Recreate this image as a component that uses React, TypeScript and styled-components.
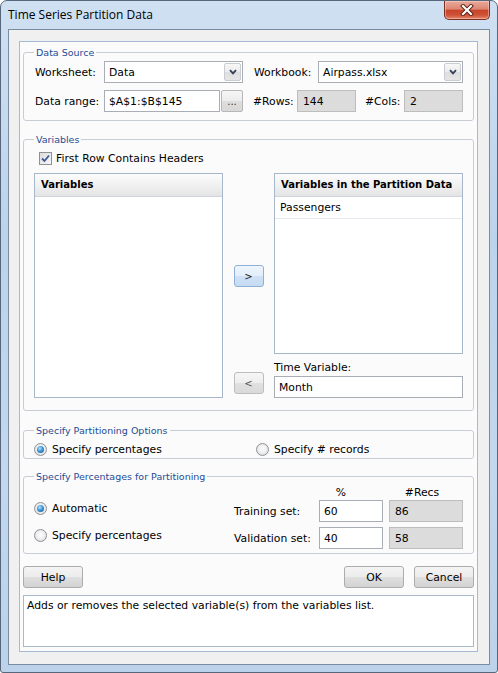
import React from 'react';
import styled, { createGlobalStyle } from 'styled-components';

const GlobalStyle = createGlobalStyle`
  html, body {
    margin: 0;
    padding: 0;
    background: #ffffff;
  }
  body {
    font-family: "DejaVu Sans", sans-serif;
    font-size: 10.8px;
    color: #000;
  }
  * {
    box-sizing: border-box;
  }
`;

const Window = styled.div`
  width: 498px;
  height: 673px;
  display: flex;
  flex-direction: column;
  border: 1px solid #56677b;
  border-radius: 7px 7px 3px 3px;
  background: linear-gradient(180deg, #cfe0f2 0%, #bcd3ec 35%, #c3d8ee 70%, #bcd2ea 100%);
  overflow: hidden;
`;

const TitleBar = styled.div`
  height: 28px;
  display: flex;
  align-items: flex-start;
  justify-content: space-between;
  padding-left: 7px;
`;

const Title = styled.span`
  font-family: "Open Sans", "Noto Sans", sans-serif;
  font-size: 12px;
  line-height: 28px;
  color: #000;
`;

const CloseButton = styled.div`
  width: 46px;
  height: 19px;
  margin-right: 7px;
  display: flex;
  align-items: center;
  justify-content: center;
  border: 1px solid #7b3024;
  border-top: none;
  border-radius: 0 0 5px 5px;
  background: linear-gradient(180deg, #e9aa9c 0%, #dc8672 45%, #c7442b 52%, #cf5236 78%, #e2876b 100%);
  box-shadow: inset 0 0 0 1px rgba(255, 220, 210, 0.45);
`;

const Client = styled.div`
  flex: 1;
  display: flex;
  margin: 0 7px 7px 7px;
  padding: 11px 11px 12px 10px;
  border: 1px solid #7b8ca1;
  background: #f0f0f0;
`;

const Panel = styled.div`
  flex: 1;
  display: flex;
  flex-direction: column;
  padding: 4px 3px 4px 3px;
  border: 1px solid #a6bad3;
  background: #fbfbfb;
`;

const Group = styled.fieldset<{ $pad: string; $mt?: number }>`
  margin: ${({ $mt }) => $mt ?? 0}px 0 0;
  padding: ${({ $pad }) => $pad};
  border: 1px solid #c6cdd7;
  border-radius: 3px;
  min-width: 0;
`;

const Legend = styled.legend`
  padding: 0 2px;
  font-size: 9.5px;
  line-height: 13px;
  color: #1f4b94;
`;

const FieldRow = styled.div<{ $mt?: number }>`
  display: flex;
  align-items: center;
  height: 22px;
  margin-top: ${({ $mt }) => $mt ?? 0}px;
`;

const FieldLabel = styled.span<{ $w: number; $ml?: number }>`
  flex: none;
  width: ${({ $w }) => $w}px;
  margin-left: ${({ $ml }) => $ml ?? 0}px;
  padding-left: 1px;
  white-space: nowrap;
`;

const TextBox = styled.div<{ $w?: number; $ro?: boolean }>`
  flex: none;
  width: ${({ $w }) => ($w ? `${$w}px` : '100%')};
  height: 22px;
  display: flex;
  align-items: center;
  padding-left: ${({ $ro }) => ($ro ? 5 : 4)}px;
  border: 1px solid ${({ $ro }) => ($ro ? '#bdbdbd' : '#a9aeb6')};
  background: ${({ $ro }) => ($ro ? '#dcdcdc' : '#ffffff')};
  white-space: nowrap;
`;

const SelectBox = styled.div<{ $w: number }>`
  flex: none;
  width: ${({ $w }) => $w}px;
  height: 22px;
  display: flex;
  align-items: stretch;
  border: 1px solid #a9aeb6;
  background: #ffffff;
`;

const SelectValue = styled.span`
  flex: 1;
  display: flex;
  align-items: center;
  padding-left: 4px;
`;

const ArrowBox = styled.span`
  width: 17px;
  margin: 1px;
  display: flex;
  align-items: center;
  justify-content: center;
  border: 1px solid #c9cdd2;
  border-radius: 2px;
  background: linear-gradient(180deg, #f7f7f7 0%, #ececec 50%, #dedede 51%, #e6e6e6 100%);
`;

const EllipsisButton = styled.div`
  flex: none;
  width: 22px;
  height: 22px;
  margin-left: 1px;
  display: flex;
  align-items: flex-end;
  justify-content: center;
  padding-bottom: 4px;
  border: 1px solid #b7b7b7;
  border-radius: 2px;
  background: linear-gradient(180deg, #f6f6f6 0%, #ececec 50%, #dedede 51%, #d8d8d8 100%);
  color: #333;
  font-size: 10px;
  line-height: 10px;
`;

const CheckRow = styled.label`
  display: flex;
  align-items: center;
  gap: 4px;
  height: 15px;
  padding-left: 5px;
`;

const CheckBox = styled.span`
  flex: none;
  width: 13px;
  height: 13px;
  display: flex;
  align-items: center;
  justify-content: center;
  border: 1px solid #8e9297;
  background: linear-gradient(135deg, #dcdcdc 0%, #f7f7f7 100%);
`;

const ListsGrid = styled.div`
  display: grid;
  grid-template-columns: 189px 51px 189px;
  height: 225px;
  margin-top: 7px;
`;

const ListBox = styled.div<{ $h?: number }>`
  display: flex;
  flex-direction: column;
  height: ${({ $h }) => ($h ? `${$h}px` : '100%')};
  border: 1px solid #a7b6c8;
  background: #ffffff;
`;

const ListHeader = styled.div`
  height: 23px;
  flex: none;
  padding-left: 6px;
  line-height: 22px;
  font-size: 10px;
  font-weight: 700;
  border-bottom: 1px solid #cfd4da;
  background: linear-gradient(180deg, #fcfcfc 0%, #f1f1f1 50%, #e4e4e4 100%);
  white-space: nowrap;
`;

const ListItem = styled.div`
  height: 22px;
  padding-left: 5px;
  line-height: 21px;
  border-bottom: 1px solid #e6eaef;
`;

const MoveColumn = styled.div`
  display: flex;
  flex-direction: column;
  align-items: center;
`;

const MoveButton = styled.div<{ $hot?: boolean; $top?: number }>`
  width: 30px;
  height: 22px;
  margin-top: ${({ $top }) => ($top !== undefined ? `${$top}px` : 'auto')};
  margin-bottom: ${({ $top }) => ($top !== undefined ? 0 : 4)}px;
  display: flex;
  align-items: center;
  justify-content: center;
  border: 1px solid ${({ $hot }) => ($hot ? '#8fb1d8' : '#bdbdbd')};
  border-radius: 3px;
  background: ${({ $hot }) =>
    $hot
      ? 'linear-gradient(180deg, #eef5fc 0%, #e2eefa 50%, #cfe1f5 51%, #c6dbf2 100%)'
      : 'linear-gradient(180deg, #f6f6f6 0%, #eeeeee 50%, #e0e0e0 51%, #dadada 100%)'};
  color: ${({ $hot }) => ($hot ? '#222' : '#555')};
  font-size: 10px;
`;

const RightColumn = styled.div`
  display: flex;
  flex-direction: column;
`;

const SmallCaption = styled.div`
  margin-top: 6px;
  height: 16px;
  line-height: 16px;
`;

const RadioRow = styled.div`
  display: flex;
  align-items: center;
  height: 16px;
`;

const RadioOption = styled.label<{ $w?: number }>`
  display: flex;
  align-items: center;
  gap: 5px;
  height: 16px;
  width: ${({ $w }) => ($w ? `${$w}px` : 'auto')};
  white-space: nowrap;
`;

const RadioDot = styled.span<{ $on?: boolean }>`
  flex: none;
  width: 13px;
  height: 13px;
  display: flex;
  align-items: center;
  justify-content: center;
  border-radius: 50%;
  border: 1px solid #8d9196;
  background: radial-gradient(circle at 50% 45%, #fdfdfd 0%, #eeeeee 50%, #d4d4d4 100%);

  &::after {
    content: '';
    display: ${({ $on }) => ($on ? 'block' : 'none')};
    width: 7px;
    height: 7px;
    border-radius: 50%;
    background: radial-gradient(circle at 40% 35%, #b6e6ff 0%, #3d95d8 45%, #17508c 100%);
  }
`;

const SplitRow = styled.div`
  display: flex;
`;

const RadioColumn = styled.div`
  width: 200px;
  flex: none;
  display: flex;
  flex-direction: column;
  gap: 11px;
  padding-top: 14px;
`;

const TableColumn = styled.div`
  display: flex;
  flex-direction: column;
`;

const HeadRow = styled.div`
  display: grid;
  grid-template-columns: 85px 70px 74px;
  height: 14px;
  line-height: 14px;
`;

const HeadCell = styled.span<{ $shift: number }>`
  text-align: center;
  padding-right: ${({ $shift }) => $shift}px;
`;

const TableRow = styled.div<{ $mt?: number }>`
  display: grid;
  grid-template-columns: 85px 70px 74px;
  align-items: center;
  height: 22px;
  margin-top: ${({ $mt }) => $mt ?? 0}px;
  white-space: nowrap;
`;

const ButtonBar = styled.div`
  display: flex;
  gap: 10px;
  margin-top: 12px;
`;

const PushButton = styled.div<{ $push?: boolean }>`
  width: 60px;
  height: 22px;
  margin-left: ${({ $push }) => ($push ? 'auto' : 0)};
  display: flex;
  align-items: center;
  justify-content: center;
  border: 1px solid #acacac;
  border-radius: 3px;
  background: linear-gradient(180deg, #f4f4f4 0%, #ececec 50%, #dfdfdf 51%, #d3d3d3 100%);
`;

const Description = styled.div`
  flex: 1;
  margin-top: 7px;
  padding: 3px 3px;
  border: 1px solid #a9b8ca;
  background: #ffffff;
  line-height: 13px;
`;

const Chevron = () => (
  <svg width="8" height="6" viewBox="0 0 8 6">
    <path d="M1 1.2 L4 4.3 L7 1.2" fill="none" stroke="#34415a" strokeWidth="1.9" />
  </svg>
);

const CloseGlyph = () => (
  <svg width="14" height="12" viewBox="0 0 14 12">
    <path d="M3 2 L11 10 M11 2 L3 10" stroke="#5a1d12" strokeWidth="4" strokeLinecap="square" />
    <path d="M3 2 L11 10 M11 2 L3 10" stroke="#ffffff" strokeWidth="2.2" strokeLinecap="square" />
  </svg>
);

const CheckMark = () => (
  <svg width="9" height="9" viewBox="0 0 9 9">
    <path d="M1 4.5 L3.5 7 L8 1.5" fill="none" stroke="#3f5796" strokeWidth="1.8" />
  </svg>
);

const App: React.FC = () => {
  return (
    <>
      <GlobalStyle />
      <Window>
        <TitleBar>
          <Title>Time Series Partition Data</Title>
          <CloseButton>
            <CloseGlyph />
          </CloseButton>
        </TitleBar>
        <Client>
          <Panel>
            <Group $pad="2px 10px 8px 10px">
              <Legend>Data Source</Legend>
              <FieldRow>
                <FieldLabel $w={70}>Worksheet:</FieldLabel>
                <SelectBox $w={139}>
                  <SelectValue>Data</SelectValue>
                  <ArrowBox>
                    <Chevron />
                  </ArrowBox>
                </SelectBox>
                <FieldLabel $w={65} $ml={10}>Workbook:</FieldLabel>
                <SelectBox $w={145}>
                  <SelectValue>Airpass.xlsx</SelectValue>
                  <ArrowBox>
                    <Chevron />
                  </ArrowBox>
                </SelectBox>
              </FieldRow>
              <FieldRow $mt={7}>
                <FieldLabel $w={70}>Data range:</FieldLabel>
                <TextBox $w={116}>$A$1:$B$145</TextBox>
                <EllipsisButton>...</EllipsisButton>
                <FieldLabel $w={45} $ml={9}>#Rows:</FieldLabel>
                <TextBox $w={59} $ro>144</TextBox>
                <FieldLabel $w={40} $ml={8}>#Cols:</FieldLabel>
                <TextBox $w={59} $ro>2</TextBox>
              </FieldRow>
            </Group>

            <Group $pad="5px 10px 12px 10px" $mt={12}>
              <Legend>Variables</Legend>
              <CheckRow>
                <CheckBox>
                  <CheckMark />
                </CheckBox>
                First Row Contains Headers
              </CheckRow>
              <ListsGrid>
                <ListBox>
                  <ListHeader>Variables</ListHeader>
                </ListBox>
                <MoveColumn>
                  <MoveButton $hot $top={92}>&gt;</MoveButton>
                  <MoveButton>&lt;</MoveButton>
                </MoveColumn>
                <RightColumn>
                  <ListBox $h={181}>
                    <ListHeader>Variables in the Partition Data</ListHeader>
                    <ListItem>Passengers</ListItem>
                  </ListBox>
                  <SmallCaption>Time Variable:</SmallCaption>
                  <TextBox>Month</TextBox>
                </RightColumn>
              </ListsGrid>
            </Group>

            <Group $pad="4px 10px 1px 10px" $mt={13}>
              <Legend>Specify Partitioning Options</Legend>
              <RadioRow>
                <RadioOption $w={222}>
                  <RadioDot $on />
                  Specify percentages
                </RadioOption>
                <RadioOption>
                  <RadioDot />
                  Specify # records
                </RadioOption>
              </RadioRow>
            </Group>

            <Group $pad="3px 10px 4px 10px" $mt={11}>
              <Legend>Specify Percentages for Partitioning</Legend>
              <SplitRow>
                <RadioColumn>
                  <RadioOption>
                    <RadioDot $on />
                    Automatic
                  </RadioOption>
                  <RadioOption>
                    <RadioDot />
                    Specify percentages
                  </RadioOption>
                </RadioColumn>
                <TableColumn>
                  <HeadRow>
                    <span />
                    <HeadCell $shift={26}>%</HeadCell>
                    <HeadCell $shift={8}>#Recs</HeadCell>
                  </HeadRow>
                  <TableRow>
                    <span>Training set:</span>
                    <TextBox $w={64}>60</TextBox>
                    <TextBox $w={74} $ro>86</TextBox>
                  </TableRow>
                  <TableRow $mt={5}>
                    <span>Validation set:</span>
                    <TextBox $w={64}>40</TextBox>
                    <TextBox $w={74} $ro>58</TextBox>
                  </TableRow>
                </TableColumn>
              </SplitRow>
            </Group>

            <ButtonBar>
              <PushButton>Help</PushButton>
              <PushButton $push>OK</PushButton>
              <PushButton>Cancel</PushButton>
            </ButtonBar>

            <Description>Adds or removes the selected variable(s) from the variables list.</Description>
          </Panel>
        </Client>
      </Window>
    </>
  );
};

export default App;
